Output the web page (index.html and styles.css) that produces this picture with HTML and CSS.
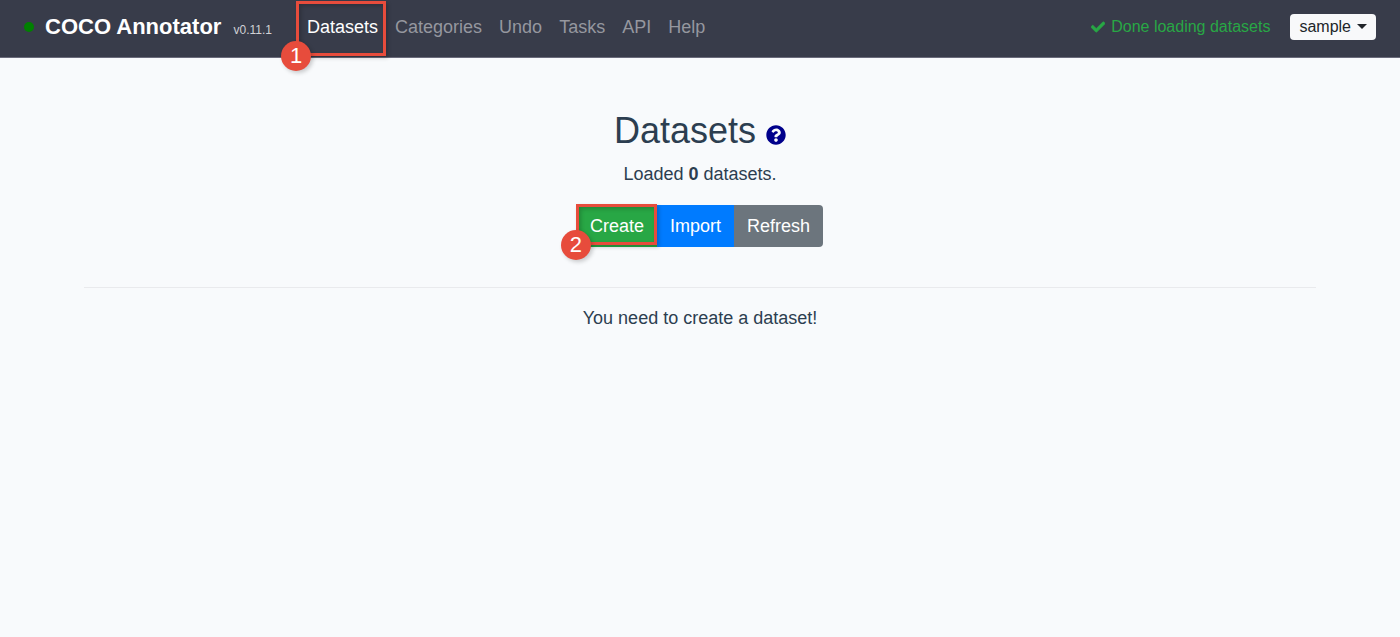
FILE: index.html
```html
<!DOCTYPE html>
<html lang="en">
<head>
<meta charset="utf-8">
<meta name="viewport" content="width=device-width, initial-scale=1">
<title>COCO Annotator</title>
<link rel="stylesheet" href="styles.css">
</head>
<body>
<header class="navbar">
  <span class="status-dot"></span>
  <a class="brand" href="#"><strong>COCO Annotator</strong> <span class="version">v0.11.1</span></a>
  <nav class="nav">
    <a class="nav-link active" href="#">Datasets<span class="marker marker-nav"><span class="marker-number">1</span></span></a>
    <a class="nav-link" href="#">Categories</a>
    <a class="nav-link" href="#">Undo</a>
    <a class="nav-link" href="#">Tasks</a>
    <a class="nav-link" href="#">API</a>
    <a class="nav-link" href="#">Help</a>
  </nav>
  <div class="load-status">
    <svg class="check" viewBox="0 0 512 512" aria-hidden="true"><path fill="currentColor" d="M173.900 439.400l-166.400-166.400c-10-10-10-26.200 0-36.200l36.200-36.200c10-10 26.200-10 36.200 0L192 312.700 432.100 72.600c10-10 26.200-10 36.200 0l36.200 36.200c10 10 10 26.200 0 36.200l-294.400 294.400c-10 10-26.200 10-36.200 0z" stroke="currentColor" stroke-width="24"/></svg>
    <span>Done loading datasets</span>
  </div>
  <button class="user-menu" type="button">sample<span class="caret"></span></button>
</header>
<main class="page">
  <h1 class="title">Datasets
    <svg class="help" viewBox="0 0 512 512" role="img" aria-label="Help"><path fill="currentColor" d="M504 256c0 137-111 248-248 248S8 393 8 256C8 119.100 119 8 256 8s248 111.100 248 248zM262.700 90c-54.500 0-89.300 23-116.500 63.800-3.500 5.300-2.400 12.400 2.700 16.300l34.700 26.300c5.200 3.900 12.600 3 16.700-2.100 17.900-22.700 30.100-35.800 57.300-35.800 20.400 0 45.700 13.100 45.700 33 0 15-12.400 22.700-32.500 34C247.100 238.500 216 254.900 216 296v4c0 6.600 5.400 12 12 12h56c6.600 0 12-5.400 12-12v-1.300c0-28.500 83.200-29.600 83.200-106.700 0-58-60.200-102-116.500-102zM256 338c-25.400 0-46 20.600-46 46s20.600 46 46 46 46-20.600 46-46-20.600-46-46-46z"/></svg>
  </h1>
  <p class="summary">Loaded <strong>0</strong> datasets.</p>
  <div class="button-group">
    <button class="btn btn-create" type="button">Create<span class="marker marker-create"><span class="marker-number">2</span></span></button>
    <button class="btn btn-import" type="button">Import</button>
    <button class="btn btn-refresh" type="button">Refresh</button>
  </div>
  <hr class="divider">
  <p class="empty">You need to create a dataset!</p>
</main>
</body>
</html>
```

FILE: styles.css
```css
* {
  box-sizing: border-box;
}

body {
  margin: 0;
  min-height: 100vh;
  background: #f8fafc;
  color: #2c3e50;
  font-family: "Liberation Sans", Arial, sans-serif;
  font-size: 18px;
  line-height: 26px;
}

.navbar {
  display: flex;
  align-items: center;
  padding: 8px 24px 12px;
  background: #383c4a;
  border-bottom: 1px solid #6a6b7b;
}

.status-dot {
  width: 10px;
  height: 10px;
  margin-right: 11px;
  border-radius: 50%;
  background: #008000;
}

.brand {
  padding-top: 4px;
  color: #fff;
  font-size: 22px;
  text-decoration: none;
  white-space: nowrap;
}

.version {
  margin-left: 6px;
  color: #d0d1d5;
  font-size: 12px;
}

.nav {
  display: flex;
  margin-left: 26px;
}

.nav-link {
  position: relative;
  padding: 6px 8px 5px 9px;
  color: #95979f;
  text-decoration: none;
}

.nav-link.active {
  color: #fff;
}

.load-status {
  display: flex;
  align-items: center;
  gap: 6px;
  margin-left: auto;
  color: #28a745;
  font-size: 16px;
}

.check {
  width: 14px;
  height: 14px;
}

.user-menu {
  display: flex;
  align-items: center;
  gap: 6px;
  margin-left: 20px;
  padding: 4px 9px;
  border: 0;
  border-radius: 4px;
  background: #f8f9fa;
  color: #212529;
  font: 16px/18px "Liberation Sans", Arial, sans-serif;
}

.caret {
  border: 5px solid transparent;
  border-top-color: currentColor;
  border-bottom: 0;
}

.page {
  padding: 51px 6% 0;
  text-align: center;
}

.title {
  margin: 0 0 8px;
  font-size: 36px;
  font-weight: 400;
  line-height: 44px;
}

.help {
  width: 20px;
  height: 20px;
  color: #00008b;
  vertical-align: -2px;
}

.summary {
  margin: 0 0 18px;
}

.button-group {
  display: flex;
  justify-content: center;
}

.btn {
  position: relative;
  padding: 8px 13px;
  border: 0;
  color: #fff;
  font: 18px/26px "Liberation Sans", Arial, sans-serif;
}

.btn-create {
  z-index: 1;
  border-radius: 4px 0 0 4px;
  background: #28a745;
}

.btn-import {
  background: #007bff;
}

.btn-refresh {
  border-radius: 0 4px 4px 0;
  background: #6c757d;
}

.divider {
  margin: 40px 0 17px;
  border: 0;
  border-top: 1px solid #e9eaed;
}

.empty {
  margin: 0;
}

.marker {
  position: absolute;
  border: 3px solid #e74c3c;
  box-shadow: 2px 2px 4px rgba(0, 0, 0, 0.2), inset 2px 2px 4px rgba(0, 0, 0, 0.2);
}

.marker-nav {
  inset: -7px 0 -11px -2px;
}

.marker-create {
  inset: -1px 0 2px -1px;
}

.marker-number {
  position: absolute;
  left: -18px;
  bottom: -18px;
  width: 30px;
  height: 30px;
  border-radius: 50%;
  background: #e74c3c;
  box-shadow: 2px 2px 4px rgba(0, 0, 0, 0.2);
  color: #fff;
  font-size: 22px;
  line-height: 30px;
  text-align: center;
}
```
